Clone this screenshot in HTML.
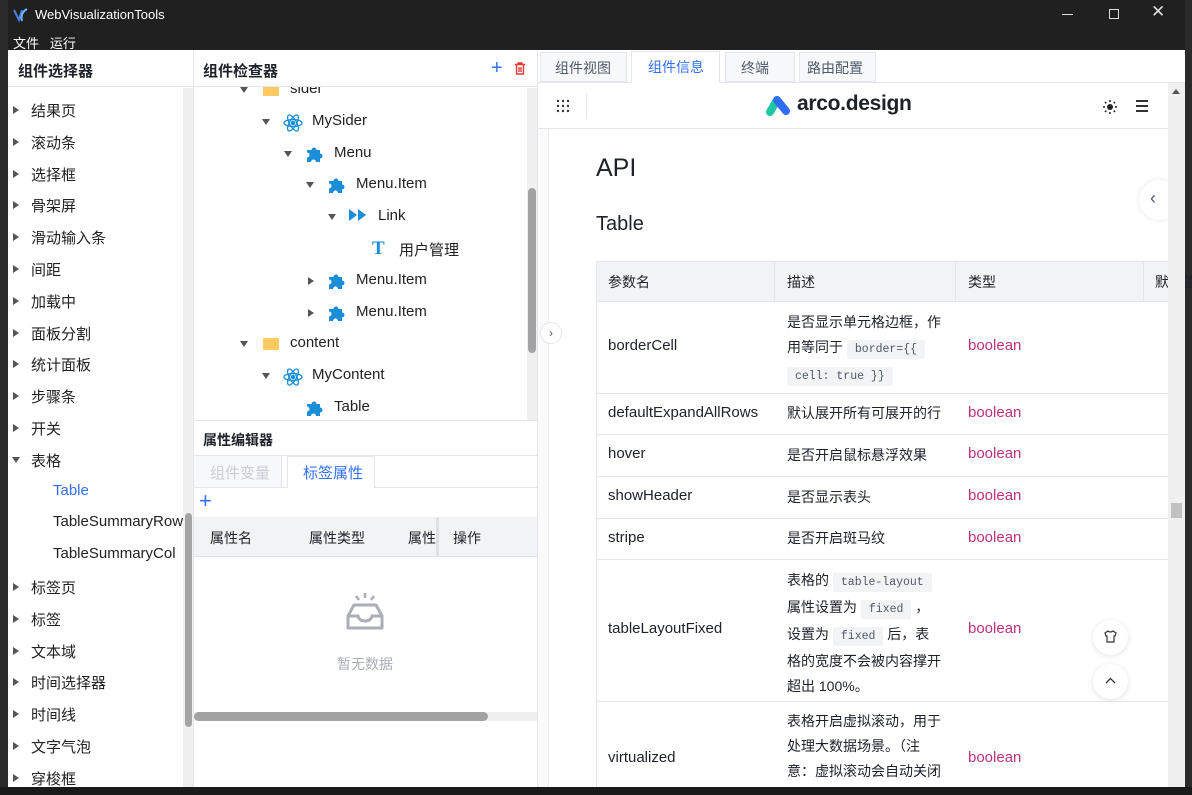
<!DOCTYPE html>
<html><head><meta charset="utf-8">
<style>
*{box-sizing:border-box;margin:0;padding:0}
body{width:1192px;height:795px;overflow:hidden;background:#2a2a2a;font-family:"Liberation Sans","Noto Sans CJK SC",sans-serif;position:relative;color:#1d2129}
.a{position:absolute;white-space:nowrap}
.tri{position:absolute;width:0;height:0;border-left:4px solid transparent;border-right:4px solid transparent;border-top:6px solid #555}
.trr{position:absolute;width:0;height:0;border-top:4px solid transparent;border-bottom:4px solid transparent;border-left:6px solid #555}
.li{font-size:15px;color:#222}
.code{background:#f2f3f5;font-family:"Liberation Mono",monospace;font-size:11.5px;color:#4e5969;padding:3px 8px;border-radius:2px}
.bool{color:#c0307e;font-size:15px}
.c1{font-size:15px;color:#1d2129}
.c2{font-size:14px;color:#1d2129;line-height:25px;white-space:normal;width:156px}
</style></head><body>
<div class="a" style="left:8px;top:0;width:1177px;height:50px;background:#202020"></div>
<svg class="a" style="left:13px;top:7px" width="16" height="16" viewBox="0 0 16 16"><path d="M1 3 L6 13 L9 3" stroke="#4a7fe0" stroke-width="2" fill="none"/><path d="M14 2 Q7 6 9 14" stroke="#6fb3ff" stroke-width="2" fill="none"/></svg>
<div class="a" style="left:35px;top:7px;color:#fff;font-size:13px">WebVisualizationTools</div>
<div class="a" style="left:1062px;top:14px;width:11px;height:1px;background:#ddd"></div>
<div class="a" style="left:1109px;top:9px;width:10px;height:10px;border:1px solid #ddd"></div>
<div class="a" style="left:1151px;top:2px;color:#ddd;font-size:17px">✕</div>
<div class="a" style="left:13px;top:33px;color:#fff;font-size:13px">文件&nbsp;&nbsp;&nbsp;运行</div>
<div class="a" style="left:8px;top:50px;width:1177px;height:737px;background:#fff"></div>
<div class="a" style="left:18px;top:60px;font-size:15px;font-weight:bold">组件选择器</div>
<div class="a" style="left:8px;top:86px;width:185px;height:1px;background:#e5e6eb"></div>
<div class="a" style="left:183px;top:88px;width:10px;height:699px;background:#f0f0f0"></div>
<div class="a" style="left:185px;top:513px;width:7px;height:214px;background:#a3a3a3;border-radius:4px"></div>
<div class="a" style="left:193px;top:50px;width:1px;height:737px;background:#e5e6eb"></div>
<div id="left"></div>
<div class="a" style="left:203px;top:60px;font-size:15px;font-weight:bold">组件检查器</div>
<div class="a" style="left:491px;top:57px;font-size:20px;color:#3370ff">+</div>
<svg class="a" style="left:514px;top:62px" width="12" height="13" viewBox="0 0 12 13"><path d="M1 2.5H11M4 2.5V1H8V2.5M2.5 2.5V12H9.5V2.5M5 5V10M7 5V10" stroke="#e53935" stroke-width="1.4" fill="none"/></svg>
<div class="a" style="left:193px;top:86px;width:344px;height:1px;background:#e5e6eb"></div>
<div class="a" style="left:527px;top:88px;width:10px;height:332px;background:#f0f0f0"></div>
<div class="a" style="left:528px;top:188px;width:8px;height:165px;background:#a3a3a3;border-radius:4px"></div>
<div id="tree"></div>
<div class="a" style="left:193px;top:420px;width:344px;height:1px;background:#e5e6eb"></div>
<div class="a" style="left:203px;top:430px;font-size:14px;font-weight:bold">属性编辑器</div>
<div class="a" style="left:194px;top:455px;width:343px;height:1px;background:#e5e6eb"></div>
<div class="a" style="left:194px;top:456px;width:88px;height:31px;background:#f7f8fa;border-right:1px solid #e5e6eb;color:#c9cdd4;font-size:15px;padding:6px 0 0 16px">组件变量</div>
<div class="a" style="left:287px;top:456px;width:88px;height:32px;background:#fff;border:1px solid #e5e6eb;border-bottom:none;color:#3370ff;font-size:15px;padding:5px 0 0 15px">标签属性</div>
<div class="a" style="left:375px;top:487px;width:162px;height:1px;background:#e5e6eb"></div>
<div class="a" style="left:194px;top:487px;width:93px;height:1px;background:#e5e6eb"></div>
<div class="a" style="left:199px;top:489px;font-size:22px;color:#3370ff;line-height:24px">+</div>
<div class="a" style="left:194px;top:517px;width:343px;height:40px;background:#f2f3f5;border-bottom:1px solid #e5e6eb"></div>
<div class="a" style="left:210px;top:528px;font-size:14px">属性名</div>
<div class="a" style="left:309px;top:528px;font-size:14px">属性类型</div>
<div class="a" style="left:408px;top:528px;font-size:14px;width:28px;overflow:hidden">属性值</div>
<div class="a" style="left:436px;top:517px;width:3px;height:40px;background:#e0e0e0"></div>
<div class="a" style="left:453px;top:528px;font-size:14px">操作</div>
<svg class="a" style="left:344px;top:592px" width="42" height="40" viewBox="0 0 42 40"><path d="M21 1V6M12 4L15 8M30 4L27 8" stroke="#a9aeb8" stroke-width="2.5"/><path d="M4 24L10 13H32L38 24V36H4Z" stroke="#a9aeb8" stroke-width="3" fill="none" stroke-linejoin="round"/><path d="M4 24H14Q15 29 21 29Q27 29 28 24H38" stroke="#a9aeb8" stroke-width="3" fill="none"/></svg>
<div class="a" style="left:337px;top:654px;font-size:14px;color:#a9aeb8">暂无数据</div>
<div class="a" style="left:194px;top:712px;width:343px;height:9px;background:#f0f0f0"></div>
<div class="a" style="left:194px;top:712px;width:294px;height:9px;background:#a3a3a3;border-radius:5px"></div>
<div class="a" style="left:537px;top:50px;width:1px;height:737px;background:#e5e6eb"></div>
<div class="a" style="left:538px;top:50px;width:647px;height:33px;background:#fff;border-bottom:1px solid #e5e6eb"></div>
<div class="a" style="left:540px;top:52px;width:87px;height:30px;background:#f7f8fa;border:1px solid #e5e6eb;font-size:14px;color:#4e5969;padding:5px 0 0 14px">组件视图</div>
<div class="a" style="left:631px;top:51px;width:89px;height:32px;background:#fff;border:1px solid #e5e6eb;border-bottom:none;font-size:14px;color:#3370ff;padding:5px 0 0 16px">组件信息</div>
<div class="a" style="left:725px;top:52px;width:70px;height:30px;background:#f7f8fa;border:1px solid #e5e6eb;font-size:14px;color:#4e5969;padding:5px 0 0 15px">终端</div>
<div class="a" style="left:799px;top:52px;width:77px;height:30px;background:#f7f8fa;border:1px solid #e5e6eb;font-size:14px;color:#4e5969;padding:5px 0 0 7px">路由配置</div>
<div class="a" style="left:538px;top:128px;width:630px;height:1px;background:#e5e6eb"></div>
<svg class="a" style="left:556px;top:99px" width="14" height="14" viewBox="0 0 14 14" fill="#333"><circle cx="2" cy="2" r="1.2"/><circle cx="7" cy="2" r="1.2"/><circle cx="12" cy="2" r="1.2"/><circle cx="2" cy="7" r="1.2"/><circle cx="7" cy="7" r="1.2"/><circle cx="12" cy="7" r="1.2"/><circle cx="2" cy="12" r="1.2"/><circle cx="7" cy="12" r="1.2"/><circle cx="12" cy="12" r="1.2"/></svg>
<div class="a" style="left:586px;top:93px;width:1px;height:26px;background:#e5e6eb"></div>
<svg class="a" style="left:766px;top:96px" width="26" height="20" viewBox="0 0 26 20"><path d="M4 16 L11 4" stroke="#1fc7a0" stroke-width="8" stroke-linecap="round"/><path d="M11 4 L20 15" stroke="#2f6df6" stroke-width="8" stroke-linecap="round"/></svg>
<div class="a" style="left:797px;top:92px;font-size:21px;font-weight:bold;color:#1d2129;letter-spacing:-0.3px">arco.design</div>
<svg class="a" style="left:1103px;top:100px" width="14" height="14" viewBox="0 0 14 14"><circle cx="7" cy="7" r="3" fill="#222"/><g stroke="#222" stroke-width="1.5"><path d="M7 0V2M7 12V14M0 7H2M12 7H14M2 2L3.3 3.3M10.7 10.7L12 12M2 12L3.3 10.7M10.7 3.3L12 2"/></g></svg>
<div class="a" style="left:1136px;top:100px;width:12px;height:2px;background:#333;box-shadow:0 5px 0 #333,0 10px 0 #333"></div>
<div class="a" style="left:538px;top:129px;width:11px;height:658px;background:#fafafa;border-right:1px solid #eee"></div>
<div class="a" style="left:540px;top:322px;width:22px;height:22px;border-radius:50%;background:#fff;border:1px solid #e5e6eb;font-size:12px;text-align:center;line-height:20px;color:#4e5969">›</div>
<div class="a" style="left:596px;top:154px;font-size:25px">API</div>
<div class="a" style="left:596px;top:213px;font-size:20px">Table</div>
<div class="a" style="left:1139px;top:180px;width:40px;height:40px;border-radius:50%;background:#fff;box-shadow:0 0 6px rgba(0,0,0,.1);font-size:18px;color:#4e5969;padding:8px 0 0 11px">‹</div>
<div class="a" style="left:596px;top:261px;width:572px;height:41px;background:#f2f3f5;border:1px solid #e5e6eb;border-right:none"></div>
<div class="a" style="left:774px;top:261px;width:1px;height:41px;background:#e5e6eb"></div>
<div class="a" style="left:955px;top:261px;width:1px;height:41px;background:#e5e6eb"></div>
<div class="a" style="left:1143px;top:261px;width:1px;height:41px;background:#e5e6eb"></div>
<div class="a" style="left:608px;top:272px;font-size:14px">参数名</div>
<div class="a" style="left:787px;top:272px;font-size:14px">描述</div>
<div class="a" style="left:968px;top:272px;font-size:14px">类型</div>
<div class="a" style="left:1155px;top:272px;font-size:14px">默认值</div>
<div class="a" style="left:596px;top:302px;width:1px;height:485px;background:#e5e6eb"></div>
<div id="rows"></div>
<div class="a" style="left:1168px;top:83px;width:17px;height:704px;background:#f0f0f0"></div>
<div class="a" style="left:1172px;top:89px;border-left:4px solid transparent;border-right:4px solid transparent;border-bottom:5px solid #555"></div>
<div class="a" style="left:1171px;top:503px;width:11px;height:15px;background:#c1c1c1"></div>
<div class="a" style="left:1093px;top:620px;width:35px;height:35px;border-radius:50%;background:#fff;box-shadow:0 1px 6px rgba(0,0,0,.12)"></div>
<svg class="a" style="left:1104px;top:630px" width="13" height="13" viewBox="0 0 13 13"><path d="M4 1L1 3L2 6H3V12H10V6H11L12 3L9 1Q6.5 3 4 1Z" stroke="#333" stroke-width="1.2" fill="none"/></svg>
<div class="a" style="left:1093px;top:664px;width:35px;height:35px;border-radius:50%;background:#fff;box-shadow:0 1px 6px rgba(0,0,0,.12)"></div>
<svg class="a" style="left:1105px;top:677px" width="11" height="7" viewBox="0 0 11 7"><path d="M1 6L5.5 1.5L10 6" stroke="#333" stroke-width="1.3" fill="none"/></svg>
<div class="a" style="left:0;top:787px;width:1192px;height:8px;background:#1a1a1a"></div>
<script>
var L=[["结果页",0],["滚动条",0],["选择框",0],["骨架屏",0],["滑动输入条",0],["间距",0],["加载中",0],["面板分割",0],["统计面板",0],["步骤条",0],["开关",0],["表格",1],["Table",2],["TableSummaryRow",3],["TableSummaryCol",3],["标签页",0],["标签",0],["文本域",0],["时间选择器",0],["时间线",0],["文字气泡",0],["穿梭框",0]];
var h="";L.forEach(function(r,i){var y=110+i*31.8;
if(r[1]==0)h+='<div class="trr" style="left:13px;top:'+(y-4)+'px"></div>';
if(r[1]==1)h+='<div class="tri" style="left:12px;top:'+(y-3)+'px"></div>';
h+='<div class="a li" style="left:'+(r[1]>=2?53:31)+'px;top:'+(y-10)+'px;'+(r[1]==2?'color:#3370ff':'')+'">'+r[0]+'</div>';});
document.getElementById("left").outerHTML='<div class="a" style="left:8px;top:87px;width:175px;height:700px;overflow:hidden"><div style="position:relative;left:-8px;top:-87px">'+h+'</div></div>';
var react='<svg width="20" height="20" viewBox="0 0 20 20" fill="none" stroke="#1a8fd8" stroke-width="1.3"><ellipse cx="10" cy="10" rx="9" ry="3.5"/><ellipse cx="10" cy="10" rx="9" ry="3.5" transform="rotate(60 10 10)"/><ellipse cx="10" cy="10" rx="9" ry="3.5" transform="rotate(120 10 10)"/><circle cx="10" cy="10" r="1.6" fill="#1a8fd8"/></svg>';
var puz='<svg width="18" height="18" viewBox="0 0 18 18"><path d="M2 5H6.5A2.5 2.5 0 1 1 11.5 5H15V8.5A2.5 2.5 0 1 1 15 13.5V17H11A2.5 2.5 0 1 0 6 17H2V12.5A2.5 2.5 0 1 0 2 7.5Z" fill="#1a8fd8"/></svg>';
var fold='<div style="width:16px;height:12px;background:#ffca62;border-radius:1px"></div>';
var link='<svg width="20" height="14" viewBox="0 0 20 14"><path d="M1 1L9 7L1 13ZM10 1L18 7L10 13Z" fill="#1a8fd8"/></svg>';
var tt='<div style="font-family:Liberation Serif,serif;font-weight:bold;color:#1a8fd8;font-size:19px;line-height:18px">T</div>';
var T=[[244,263,290,fold,"sider",1],[266,283,312,react,"MySider",1],[288,305,334,puz,"Menu",1],[310,327,356,puz,"Menu.Item",1],[332,348,378,link,"Link",1],[0,372,399,tt,"用户管理",0],[310,327,356,puz,"Menu.Item",2],[310,327,356,puz,"Menu.Item",2],[244,263,290,fold,"content",1],[266,283,312,react,"MyContent",1],[0,305,334,puz,"Table",0]];
h="";T.forEach(function(r,i){var y=90+i*31.8;
if(r[5]==1)h+='<div class="tri" style="left:'+(r[0]-4)+'px;top:'+(y-3)+'px"></div>';
if(r[5]==2)h+='<div class="trr" style="left:'+(r[0]-2)+'px;top:'+(y-4)+'px"></div>';
h+='<div class="a" style="left:'+r[1]+'px;top:'+(y-(r[3]==fold?6:9))+'px">'+r[3]+'</div>';
h+='<div class="a li" style="left:'+r[2]+'px;top:'+(y-10)+'px">'+r[4]+'</div>';});
document.getElementById("tree").outerHTML='<div class="a" style="left:194px;top:87px;width:333px;height:333px;overflow:hidden"><div style="position:relative;left:-194px;top:-87px">'+h+'</div></div>';
var R=[[301,393,"borderCell",'是否显示单元格边框，作用等同于 <span class="code">border={{</span> <span class="code">cell: true }}</span>'],[393,434,"defaultExpandAllRows","默认展开所有可展开的行"],[434,476,"hover","是否开启鼠标悬浮效果"],[476,518,"showHeader","是否显示表头"],[518,559,"stripe","是否开启斑马纹"],[559,701,"tableLayoutFixed",'表格的 <span class="code">table-layout</span> 属性设置为 <span class="code">fixed</span> ，设置为 <span class="code">fixed</span> 后，表格的宽度不会被内容撑开超出 100%。'],[701,860,"virtualized","表格开启虚拟滚动，用于处理大数据场景。（注意：虚拟滚动会自动关闭"]];
h="";R.forEach(function(r){var m=(r[0]+Math.min(r[1],817))/2;if(r[0]==701)m=759;
h+='<div class="a" style="left:596px;top:'+r[1]+'px;width:572px;height:1px;background:#e5e6eb"></div>';
h+='<div class="a c1" style="left:608px;top:'+(m-10)+'px">'+r[2]+'</div>';
h+='<div class="a bool" style="left:968px;top:'+(m-10)+'px">boolean</div>';
var lines=r[0]==301?3:r[0]==559?5:r[0]==701?3:1;var top=r[0]==701?709:m-lines*12.5;
h+='<div class="a c2" style="left:787px;top:'+top+'px">'+r[3]+'</div>';});
document.getElementById("rows").outerHTML='<div class="a" style="left:538px;top:300px;width:630px;height:487px;overflow:hidden"><div style="position:relative;left:-538px;top:-300px">'+h+'</div></div>';
</script>
</body></html>
